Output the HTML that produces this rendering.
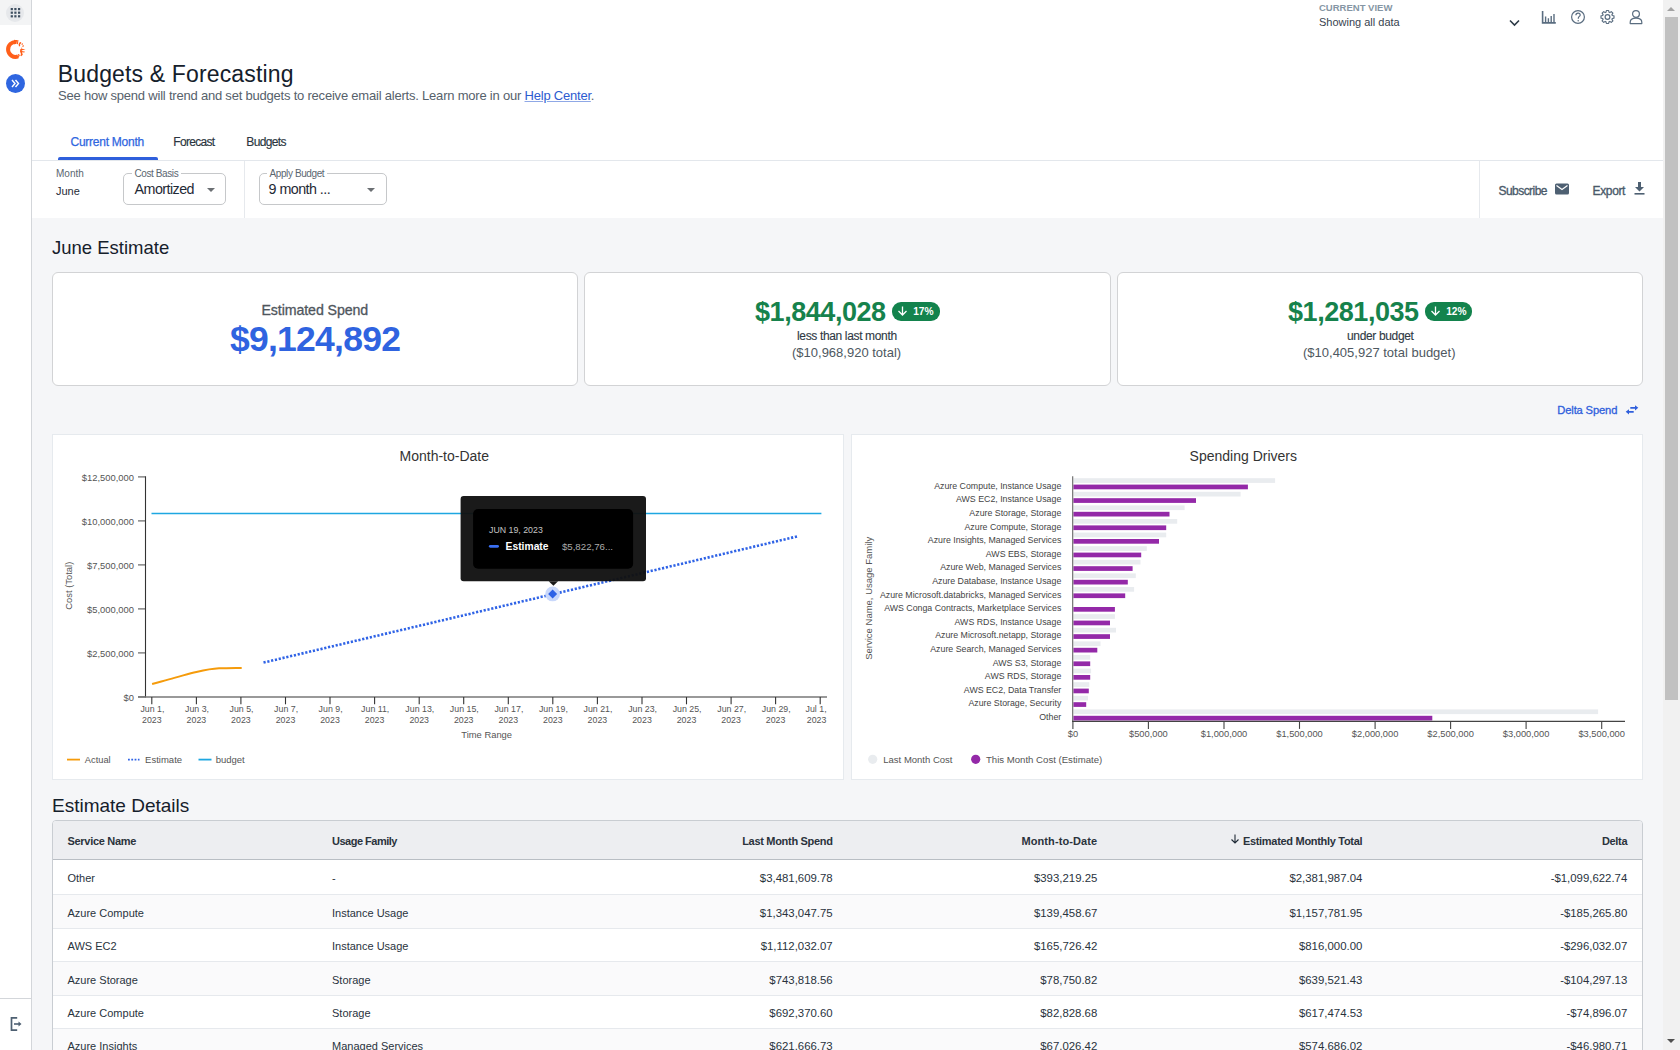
<!DOCTYPE html>
<html><head><meta charset="utf-8">
<style>
*{box-sizing:border-box;margin:0;padding:0}
html,body{width:1680px;height:1050px;overflow:hidden;background:#f5f6f8;font-family:"Liberation Sans",sans-serif;color:#1f2a36}
body{position:relative}
.a{position:absolute;white-space:nowrap}
.card{position:absolute;background:#fff;border:1px solid #d2d3d5;border-radius:6px}
.ccard{position:absolute;background:#fff;border:1px solid #e6eaee}
.badge{position:absolute;background:#13834d;color:#fff;border-radius:9px;font-weight:700;font-size:10.5px;height:18px;line-height:18px}
.sel{position:absolute;border:1px solid #c6c8ca;border-radius:5px;background:#fff}
.lbl{position:absolute;font-size:10px;color:#5b6670;background:#fff;padding:0 3px;line-height:12px;letter-spacing:-0.4px}
.caret{position:absolute;width:0;height:0;border-left:4px solid transparent;border-right:4px solid transparent;border-top:4.5px solid #6b6f73}
</style></head><body>
<!-- sidebar -->
<div class="a" style="left:0;top:0;width:32px;height:1050px;background:#fff;border-right:1px solid #d3d6da"></div>
<div class="a" style="left:0;top:0;width:31px;height:25px;background:#f3f4f5"></div>
<div class="a" style="left:6px;top:4px;width:18px;height:18px;border-radius:50%;background:#e6e8eb"></div>
<svg class="a" style="left:0;top:0" width="31" height="25">
  <g fill="#3e4f60">
    <rect x="10.7" y="8" width="2.2" height="2.2"/><rect x="14.3" y="8" width="2.2" height="2.2"/><rect x="18" y="8" width="2.2" height="2.2"/>
    <rect x="10.7" y="11.6" width="2.2" height="2.2"/><rect x="14.3" y="11.6" width="2.2" height="2.2"/><rect x="18" y="11.6" width="2.2" height="2.2"/>
    <rect x="10.7" y="15.2" width="2.2" height="2.2"/><rect x="14.3" y="15.2" width="2.2" height="2.2"/><rect x="18" y="15.2" width="2.2" height="2.2"/>
  </g>
</svg>
<svg class="a" style="left:0;top:36px" width="31" height="26" viewBox="0 36 31 26">
  <path d="M16.8 42 A7.5 7.5 0 1 0 18.1 56.45" fill="none" stroke="#ff5f1a" stroke-width="4"/>
  <path d="M14 39.8 L15.3 40 L15.6 44 L14.2 44.2 Z" fill="#ff5f1a"/>
  <path d="M17.3 40 L18.4 40.1 L18 44.3 L16.9 44 Z" fill="#ff5f1a"/>
  <path d="M19.4 42.5 L21 42 L21.3 43 L20 44.5 L20.2 46 L19 46.4 L18.6 44.5 Z" fill="#ff5f1a"/>
  <path d="M22 43.2 L23 43.6 L22.4 45 L21.4 44.6 Z" fill="#ff5f1a"/>
  <path d="M23 45 L24 45.7 L23.2 47 L22.2 46.4 Z" fill="#ff5f1a"/>
  <path d="M21.2 47.4 L22.4 48 L21.5 49 Z" fill="#ff5f1a"/>
  <path d="M21 48.8 L25.5 49.3 L21.5 50.5 L22.5 51.2 L24.8 51.5 L24.4 52.5 L22 52.2 L22.8 54.8 L21.2 56.2 L20.4 55.8 L21 54 L20 51.5 L20.2 49.5 Z" fill="#ff5f1a"/>
  <path d="M18 54 L19.2 54.3 L19.8 55.6 L18.6 57.6 L17.6 57.2 L18.3 56 Z" fill="#ff5f1a"/>
</svg>
<div class="a" style="left:6px;top:74px;width:19px;height:19px;border-radius:50%;background:#2f66e0"></div>
<svg class="a" style="left:6px;top:74px" width="19" height="19" viewBox="0 0 19 19"><path d="M6 6 L9 9.5 L6 13 M9.5 6 L12.5 9.5 L9.5 13" fill="none" stroke="#fff" stroke-width="1.4"/></svg>
<svg class="a" style="left:10px;top:1016px" width="13" height="16" viewBox="0 0 13 16"><path d="M7.2 1.8 H1.5 V14.2 H7.2" fill="none" stroke="#4e6072" stroke-width="1.7"/><path d="M4 8 H9" stroke="#4e6072" stroke-width="1.6"/><path d="M8.5 5.5 L11.5 8 L8.5 10.5 Z" fill="#4e6072"/></svg>
<div class="a" style="left:0;top:998px;width:31px;height:1px;background:#d3d6da"></div>

<!-- header -->
<div class="a" style="left:32px;top:0;width:1631px;height:161px;background:#fff;border-bottom:1px solid #e3e7ec"></div>
<div class="a" style="left:32px;top:161px;width:1631px;height:57px;background:#fff"></div>
<div class="a" style="left:244px;top:161px;width:1px;height:57px;background:#e6e9ed"></div>
<div class="a" style="left:1479px;top:161px;width:1px;height:57px;background:#e6e9ed"></div>

<div class="a" style="left:57.8px;top:60px;font-size:23px;color:#15202b;line-height:28px;letter-spacing:0.15px">Budgets &amp; Forecasting</div>
<div class="a" style="left:58px;top:88px;font-size:13px;color:#56616b;line-height:16px;letter-spacing:-0.21px">See how spend will trend and set budgets to receive email alerts. Learn more in our <span style="color:#2d5bd0;text-decoration:underline;text-decoration-color:#8fa8e6">Help Center</span>.</div>

<div class="a" style="left:70.5px;top:135px;font-size:12px;color:#2f66e0;line-height:14px;letter-spacing:-0.25px;-webkit-text-stroke:0.25px #2f66e0">Current Month</div>
<div class="a" style="left:173.3px;top:135px;font-size:12px;color:#2a3540;line-height:14px;letter-spacing:-0.7px;-webkit-text-stroke:0.15px #2a3540">Forecast</div>
<div class="a" style="left:246.3px;top:135px;font-size:12px;color:#2a3540;line-height:14px;letter-spacing:-0.65px;-webkit-text-stroke:0.15px #2a3540">Budgets</div>
<div class="a" style="left:58px;top:157px;width:100px;height:3px;background:#2f5fdc;border-radius:2px 2px 0 0"></div>

<!-- filters -->
<div class="a" style="left:56px;top:168px;font-size:10px;color:#5b6670;line-height:12px">Month</div>
<div class="a" style="left:56px;top:185px;font-size:11px;color:#1f2a36;line-height:13px">June</div>
<div class="sel" style="left:123px;top:173px;width:103px;height:32px"></div>
<div class="lbl" style="left:131.5px;top:167.6px">Cost Basis</div>
<div class="a" style="left:134.6px;top:182px;font-size:14.3px;letter-spacing:-0.55px;color:#1f2a36;line-height:15px">Amortized</div>
<div class="caret" style="left:206.6px;top:187.5px"></div>
<div class="sel" style="left:259px;top:173px;width:128px;height:32px"></div>
<div class="lbl" style="left:266.5px;top:167.6px">Apply Budget</div>
<div class="a" style="left:268.6px;top:182px;font-size:14.3px;letter-spacing:-0.55px;color:#1f2a36;line-height:15px">9 month ...</div>
<div class="caret" style="left:366.6px;top:187.5px"></div>

<div class="a" style="left:1498.5px;top:183.5px;font-size:12px;font-weight:400;color:#4a5a6a;line-height:14px;letter-spacing:-0.55px;-webkit-text-stroke:0.35px #4a5a6a">Subscribe</div>
<svg class="a" style="left:1555px;top:183px" width="14" height="12" viewBox="0 0 14 12"><rect x="0" y="0.5" width="14" height="11" rx="1.5" fill="#4e6072"/><path d="M1.5 2.5 L7 6.5 L12.5 2.5" stroke="#fff" stroke-width="1.2" fill="none"/></svg>
<div class="a" style="left:1592.5px;top:183.5px;font-size:12px;font-weight:400;color:#4a5a6a;line-height:14px;letter-spacing:-0.35px;-webkit-text-stroke:0.35px #4a5a6a">Export</div>
<svg class="a" style="left:1634px;top:182px" width="11" height="13" viewBox="0 0 11 13"><path d="M4 0 H7 V5 H10 L5.5 9.5 L1 5 H4 Z" fill="#4e6072"/><rect x="0.5" y="11" width="10" height="1.6" fill="#4e6072"/></svg>

<!-- top right header -->
<div class="a" style="left:1319px;top:2px;font-size:9.5px;font-weight:700;color:#8596a4;line-height:11px;letter-spacing:0px">CURRENT VIEW</div>
<div class="a" style="left:1319px;top:16px;font-size:11px;color:#37434f;line-height:13px">Showing all data</div>
<svg class="a" style="left:1509px;top:18.5px" width="11" height="8" viewBox="0 0 11 8"><path d="M1 1.5 L5.5 6 L10 1.5" stroke="#2d3a47" stroke-width="1.6" fill="none"/></svg>


<!-- June Estimate -->
<div class="a" style="left:52px;top:237px;font-size:18.5px;color:#15202b;line-height:22px">June Estimate</div>
<div class="card" style="left:52px;top:272px;width:526px;height:114px"></div>
<div class="card" style="left:584px;top:272px;width:527px;height:114px"></div>
<div class="card" style="left:1117px;top:272px;width:526px;height:114px"></div>
<div class="a" style="left:261.5px;top:302px;font-size:14.2px;color:#4f565d;line-height:17px;letter-spacing:-0.1px;-webkit-text-stroke:0.3px #4f565d">Estimated Spend</div>
<div class="a" style="left:230px;top:319.5px;font-size:35.5px;font-weight:700;color:#2f63e0;line-height:38px;letter-spacing:-0.75px">$9,124,892</div>

<div class="a" style="left:755px;top:297.2px;font-size:27px;font-weight:700;color:#16824c;line-height:30px;letter-spacing:-0.45px">$1,844,028</div>
<div class="badge" style="left:892px;top:302px;width:48px;height:19px"></div>
<svg class="a" style="left:897px;top:306px" width="11" height="10" viewBox="0 0 11 10"><path d="M5.5 0.5 V9 M1.5 5 L5.5 9 L9.5 5" stroke="#fff" stroke-width="1.3" fill="none"/></svg>
<div class="a" style="left:913.3px;top:304.5px;font-size:10.2px;font-weight:700;color:#fff;line-height:13px;letter-spacing:-0.1px">17%</div>
<div class="a" style="left:797px;top:328.8px;font-size:12px;font-weight:400;color:#2f3944;line-height:14px;letter-spacing:-0.35px;-webkit-text-stroke:0.12px #2f3944">less than last month</div>
<div class="a" style="left:792px;top:344.5px;font-size:13px;color:#4e5861;line-height:16px">($10,968,920 total)</div>

<div class="a" style="left:1288px;top:297.2px;font-size:27px;font-weight:700;color:#16824c;line-height:30px;letter-spacing:-0.45px">$1,281,035</div>
<div class="badge" style="left:1425px;top:302px;width:47px;height:19px"></div>
<svg class="a" style="left:1430px;top:306px" width="11" height="10" viewBox="0 0 11 10"><path d="M5.5 0.5 V9 M1.5 5 L5.5 9 L9.5 5" stroke="#fff" stroke-width="1.3" fill="none"/></svg>
<div class="a" style="left:1446.3px;top:304.5px;font-size:10.2px;font-weight:700;color:#fff;line-height:13px;letter-spacing:-0.1px">12%</div>
<div class="a" style="left:1347px;top:328.8px;font-size:12px;font-weight:400;color:#2f3944;line-height:14px;letter-spacing:-0.35px;-webkit-text-stroke:0.12px #2f3944">under budget</div>
<div class="a" style="left:1303px;top:344.5px;font-size:13px;color:#4e5861;line-height:16px">($10,405,927 total budget)</div>

<div class="a" style="left:1557.3px;top:403.2px;font-size:11.2px;color:#2f5fdc;line-height:14px;letter-spacing:-0.15px;-webkit-text-stroke:0.3px #2f5fdc">Delta Spend</div>
<svg class="a" style="left:1625px;top:404px" width="14" height="12" viewBox="0 0 14 12"><path d="M5.3 3.8 H10.5 M3.5 7.8 H8.7" stroke="#2f5fdc" stroke-width="1.8" fill="none"/><path d="M10 1.2 L13.3 3.8 L10 6.4 Z M4 5.2 L0.7 7.8 L4 10.4 Z" fill="#2f5fdc"/></svg>

<!-- CHARTS -->
<div class="ccard" style="left:52px;top:434px;width:792px;height:346px"></div>
<div class="ccard" style="left:851px;top:434px;width:792px;height:346px"></div>
<svg class="a" style="left:0;top:0" width="1680" height="1050" viewBox="0 0 1680 1050">
<text x="444.3" y="460.8" text-anchor="middle" font-family="Liberation Sans" font-size="14" fill="#333">Month-to-Date</text>
<line x1="138" y1="696.9" x2="145.5" y2="696.9" stroke="#666" stroke-width="1.2"/>
<text x="134" y="700.5" text-anchor="end" font-family="Liberation Sans" font-size="9.4" fill="#555">$0</text>
<line x1="138" y1="652.9" x2="145.5" y2="652.9" stroke="#666" stroke-width="1.2"/>
<text x="134" y="656.5" text-anchor="end" font-family="Liberation Sans" font-size="9.4" fill="#555">$2,500,000</text>
<line x1="138" y1="608.9" x2="145.5" y2="608.9" stroke="#666" stroke-width="1.2"/>
<text x="134" y="612.5" text-anchor="end" font-family="Liberation Sans" font-size="9.4" fill="#555">$5,000,000</text>
<line x1="138" y1="564.9" x2="145.5" y2="564.9" stroke="#666" stroke-width="1.2"/>
<text x="134" y="568.5" text-anchor="end" font-family="Liberation Sans" font-size="9.4" fill="#555">$7,500,000</text>
<line x1="138" y1="520.9" x2="145.5" y2="520.9" stroke="#666" stroke-width="1.2"/>
<text x="134" y="524.5" text-anchor="end" font-family="Liberation Sans" font-size="9.4" fill="#555">$10,000,000</text>
<line x1="138" y1="476.9" x2="145.5" y2="476.9" stroke="#666" stroke-width="1.2"/>
<text x="134" y="480.5" text-anchor="end" font-family="Liberation Sans" font-size="9.4" fill="#555">$12,500,000</text>
<line x1="145.5" y1="476.3" x2="145.5" y2="697.5" stroke="#333" stroke-width="1.1"/>
<line x1="138" y1="697" x2="827" y2="697" stroke="#777" stroke-width="1.4"/>
<line x1="151.8" y1="697" x2="151.8" y2="704.3" stroke="#333" stroke-width="1.1"/>
<text x="152.4" y="711.9" text-anchor="middle" font-family="Liberation Sans" font-size="8.8" fill="#555">Jun 1,</text>
<text x="151.8" y="722.7" text-anchor="middle" font-family="Liberation Sans" font-size="8.8" fill="#555">2023</text>
<line x1="196.4" y1="697" x2="196.4" y2="704.3" stroke="#333" stroke-width="1.1"/>
<text x="197.0" y="711.9" text-anchor="middle" font-family="Liberation Sans" font-size="8.8" fill="#555">Jun 3,</text>
<text x="196.4" y="722.7" text-anchor="middle" font-family="Liberation Sans" font-size="8.8" fill="#555">2023</text>
<line x1="240.9" y1="697" x2="240.9" y2="704.3" stroke="#333" stroke-width="1.1"/>
<text x="241.5" y="711.9" text-anchor="middle" font-family="Liberation Sans" font-size="8.8" fill="#555">Jun 5,</text>
<text x="240.9" y="722.7" text-anchor="middle" font-family="Liberation Sans" font-size="8.8" fill="#555">2023</text>
<line x1="285.5" y1="697" x2="285.5" y2="704.3" stroke="#333" stroke-width="1.1"/>
<text x="286.1" y="711.9" text-anchor="middle" font-family="Liberation Sans" font-size="8.8" fill="#555">Jun 7,</text>
<text x="285.5" y="722.7" text-anchor="middle" font-family="Liberation Sans" font-size="8.8" fill="#555">2023</text>
<line x1="330.0" y1="697" x2="330.0" y2="704.3" stroke="#333" stroke-width="1.1"/>
<text x="330.6" y="711.9" text-anchor="middle" font-family="Liberation Sans" font-size="8.8" fill="#555">Jun 9,</text>
<text x="330.0" y="722.7" text-anchor="middle" font-family="Liberation Sans" font-size="8.8" fill="#555">2023</text>
<line x1="374.6" y1="697" x2="374.6" y2="704.3" stroke="#333" stroke-width="1.1"/>
<text x="375.2" y="711.9" text-anchor="middle" font-family="Liberation Sans" font-size="8.8" fill="#555">Jun 11,</text>
<text x="374.6" y="722.7" text-anchor="middle" font-family="Liberation Sans" font-size="8.8" fill="#555">2023</text>
<line x1="419.2" y1="697" x2="419.2" y2="704.3" stroke="#333" stroke-width="1.1"/>
<text x="419.8" y="711.9" text-anchor="middle" font-family="Liberation Sans" font-size="8.8" fill="#555">Jun 13,</text>
<text x="419.2" y="722.7" text-anchor="middle" font-family="Liberation Sans" font-size="8.8" fill="#555">2023</text>
<line x1="463.7" y1="697" x2="463.7" y2="704.3" stroke="#333" stroke-width="1.1"/>
<text x="464.3" y="711.9" text-anchor="middle" font-family="Liberation Sans" font-size="8.8" fill="#555">Jun 15,</text>
<text x="463.7" y="722.7" text-anchor="middle" font-family="Liberation Sans" font-size="8.8" fill="#555">2023</text>
<line x1="508.3" y1="697" x2="508.3" y2="704.3" stroke="#333" stroke-width="1.1"/>
<text x="508.9" y="711.9" text-anchor="middle" font-family="Liberation Sans" font-size="8.8" fill="#555">Jun 17,</text>
<text x="508.3" y="722.7" text-anchor="middle" font-family="Liberation Sans" font-size="8.8" fill="#555">2023</text>
<line x1="552.8" y1="697" x2="552.8" y2="704.3" stroke="#333" stroke-width="1.1"/>
<text x="553.4" y="711.9" text-anchor="middle" font-family="Liberation Sans" font-size="8.8" fill="#555">Jun 19,</text>
<text x="552.8" y="722.7" text-anchor="middle" font-family="Liberation Sans" font-size="8.8" fill="#555">2023</text>
<line x1="597.4" y1="697" x2="597.4" y2="704.3" stroke="#333" stroke-width="1.1"/>
<text x="598.0" y="711.9" text-anchor="middle" font-family="Liberation Sans" font-size="8.8" fill="#555">Jun 21,</text>
<text x="597.4" y="722.7" text-anchor="middle" font-family="Liberation Sans" font-size="8.8" fill="#555">2023</text>
<line x1="642.0" y1="697" x2="642.0" y2="704.3" stroke="#333" stroke-width="1.1"/>
<text x="642.6" y="711.9" text-anchor="middle" font-family="Liberation Sans" font-size="8.8" fill="#555">Jun 23,</text>
<text x="642.0" y="722.7" text-anchor="middle" font-family="Liberation Sans" font-size="8.8" fill="#555">2023</text>
<line x1="686.5" y1="697" x2="686.5" y2="704.3" stroke="#333" stroke-width="1.1"/>
<text x="687.1" y="711.9" text-anchor="middle" font-family="Liberation Sans" font-size="8.8" fill="#555">Jun 25,</text>
<text x="686.5" y="722.7" text-anchor="middle" font-family="Liberation Sans" font-size="8.8" fill="#555">2023</text>
<line x1="731.1" y1="697" x2="731.1" y2="704.3" stroke="#333" stroke-width="1.1"/>
<text x="731.7" y="711.9" text-anchor="middle" font-family="Liberation Sans" font-size="8.8" fill="#555">Jun 27,</text>
<text x="731.1" y="722.7" text-anchor="middle" font-family="Liberation Sans" font-size="8.8" fill="#555">2023</text>
<line x1="775.6" y1="697" x2="775.6" y2="704.3" stroke="#333" stroke-width="1.1"/>
<text x="776.2" y="711.9" text-anchor="middle" font-family="Liberation Sans" font-size="8.8" fill="#555">Jun 29,</text>
<text x="775.6" y="722.7" text-anchor="middle" font-family="Liberation Sans" font-size="8.8" fill="#555">2023</text>
<line x1="820.2" y1="697" x2="820.2" y2="704.3" stroke="#333" stroke-width="1.1"/>
<text x="826.6" y="711.9" text-anchor="end" font-family="Liberation Sans" font-size="8.8" fill="#555">Jul 1,</text>
<text x="826.4" y="722.7" text-anchor="end" font-family="Liberation Sans" font-size="8.8" fill="#555">2023</text>
<text x="486.7" y="738" text-anchor="middle" font-family="Liberation Sans" font-size="9.4" fill="#555">Time Range</text>
<text transform="translate(72.3 585.7) rotate(-90)" text-anchor="middle" font-family="Liberation Sans" font-size="9.4" fill="#555">Cost (Total)</text>
<line x1="151.5" y1="513.5" x2="821.4" y2="513.5" stroke="#1ea7e1" stroke-width="1.6"/>
<path d="M152.1 684 C159.5 682 167 679.8 174.3 677.9 C181.7 676 189 673.5 196.4 671.9 C204 670.2 211.5 668.7 219 668.3 C226.6 668 234 668 241.7 667.9" fill="none" stroke="#f59b0b" stroke-width="2"/>
<line x1="263.5" y1="662.6" x2="798.2" y2="536.2" stroke="#2f63e6" stroke-width="2.6" stroke-dasharray="2.2 1.7"/>
<circle cx="552.6" cy="593.9" r="7.4" fill="#c9d8fb"/>
<path d="M552.6 589.4 L557.1 593.9 L552.6 598.4 L548.1 593.9 Z" fill="#2f63e6"/>
<rect x="460.6" y="496" width="185.4" height="85.3" rx="3" fill="#111" fill-opacity="0.96"/>
<path d="M548.7 581.2 L558.1 581.2 L553.4 585.8 Z" fill="#111" fill-opacity="0.96"/>
<rect x="473.1" y="509" width="160" height="59.8" rx="5" fill="#000"/>
<text x="489" y="532.9" font-family="Liberation Sans" font-size="8.8" fill="#c4c4c4">JUN 19, 2023</text>
<line x1="490.3" y1="546.3" x2="497.6" y2="546.3" stroke="#3a6ff2" stroke-width="2.8" stroke-linecap="round"/>
<text x="505.6" y="550" font-family="Liberation Sans" font-size="10.3" font-weight="700" fill="#fff">Estimate</text>
<text x="561.9" y="550" font-family="Liberation Sans" font-size="9.7" fill="#aaa">$5,822,76...</text>
<line x1="67" y1="759.6" x2="80" y2="759.6" stroke="#f59b0b" stroke-width="1.8"/>
<text x="84.8" y="762.6" font-family="Liberation Sans" font-size="9.3" fill="#555">Actual</text>
<line x1="128" y1="759.6" x2="139.5" y2="759.6" stroke="#2f63e6" stroke-width="1.8" stroke-dasharray="1.8 1.5"/>
<text x="145.1" y="762.6" font-family="Liberation Sans" font-size="9.5" fill="#555">Estimate</text>
<line x1="198.5" y1="759.6" x2="211.5" y2="759.6" stroke="#1ea7e1" stroke-width="1.8"/>
<text x="215.7" y="762.6" font-family="Liberation Sans" font-size="9.5" fill="#555">budget</text>
<text x="1243.3" y="460.8" text-anchor="middle" font-family="Liberation Sans" font-size="14" fill="#333">Spending Drivers</text>
<rect x="1073.4" y="478.2" width="201.7" height="4.7" fill="#e9ecef"/>
<rect x="1073.4" y="484.6" width="174.5" height="4.7" fill="#9429a8"/>
<text x="1061.3" y="488.8" text-anchor="end" font-family="Liberation Sans" font-size="8.8" fill="#444">Azure Compute, Instance Usage</text>
<rect x="1073.4" y="491.8" width="167.2" height="4.7" fill="#e9ecef"/>
<rect x="1073.4" y="498.2" width="122.6" height="4.7" fill="#9429a8"/>
<text x="1061.3" y="502.4" text-anchor="end" font-family="Liberation Sans" font-size="8.8" fill="#444">AWS EC2, Instance Usage</text>
<rect x="1073.4" y="505.4" width="111.2" height="4.7" fill="#e9ecef"/>
<rect x="1073.4" y="511.8" width="96.1" height="4.7" fill="#9429a8"/>
<text x="1061.3" y="516.0" text-anchor="end" font-family="Liberation Sans" font-size="8.8" fill="#444">Azure Storage, Storage</text>
<rect x="1073.4" y="519.0" width="103.8" height="4.7" fill="#e9ecef"/>
<rect x="1073.4" y="525.4" width="92.8" height="4.7" fill="#9429a8"/>
<text x="1061.3" y="529.6" text-anchor="end" font-family="Liberation Sans" font-size="8.8" fill="#444">Azure Compute, Storage</text>
<rect x="1073.4" y="532.6" width="92.8" height="4.7" fill="#e9ecef"/>
<rect x="1073.4" y="539.0" width="85.6" height="4.7" fill="#9429a8"/>
<text x="1061.3" y="543.2" text-anchor="end" font-family="Liberation Sans" font-size="8.8" fill="#444">Azure Insights, Managed Services</text>
<rect x="1073.4" y="546.2" width="73.4" height="4.7" fill="#e9ecef"/>
<rect x="1073.4" y="552.6" width="67.8" height="4.7" fill="#9429a8"/>
<text x="1061.3" y="556.8" text-anchor="end" font-family="Liberation Sans" font-size="8.8" fill="#444">AWS EBS, Storage</text>
<rect x="1073.4" y="559.8" width="67.1" height="4.7" fill="#e9ecef"/>
<rect x="1073.4" y="566.2" width="59.2" height="4.7" fill="#9429a8"/>
<text x="1061.3" y="570.4" text-anchor="end" font-family="Liberation Sans" font-size="8.8" fill="#444">Azure Web, Managed Services</text>
<rect x="1073.4" y="573.4" width="62.4" height="4.7" fill="#e9ecef"/>
<rect x="1073.4" y="579.8" width="54.4" height="4.7" fill="#9429a8"/>
<text x="1061.3" y="584.0" text-anchor="end" font-family="Liberation Sans" font-size="8.8" fill="#444">Azure Database, Instance Usage</text>
<rect x="1073.4" y="587.0" width="60.7" height="4.7" fill="#e9ecef"/>
<rect x="1073.4" y="593.4" width="51.8" height="4.7" fill="#9429a8"/>
<text x="1061.3" y="597.6" text-anchor="end" font-family="Liberation Sans" font-size="8.8" fill="#444">Azure Microsoft.databricks, Managed Services</text>
<rect x="1073.4" y="607.0" width="41.5" height="4.7" fill="#9429a8"/>
<text x="1061.3" y="611.2" text-anchor="end" font-family="Liberation Sans" font-size="8.8" fill="#444">AWS Conga Contracts, Marketplace Services</text>
<rect x="1073.4" y="614.2" width="41.5" height="4.7" fill="#e9ecef"/>
<rect x="1073.4" y="620.6" width="36.6" height="4.7" fill="#9429a8"/>
<text x="1061.3" y="624.8" text-anchor="end" font-family="Liberation Sans" font-size="8.8" fill="#444">AWS RDS, Instance Usage</text>
<rect x="1073.4" y="627.8" width="42.6" height="4.7" fill="#e9ecef"/>
<rect x="1073.4" y="634.2" width="36.6" height="4.7" fill="#9429a8"/>
<text x="1061.3" y="638.4" text-anchor="end" font-family="Liberation Sans" font-size="8.8" fill="#444">Azure Microsoft.netapp, Storage</text>
<rect x="1073.4" y="641.4" width="27.1" height="4.7" fill="#e9ecef"/>
<rect x="1073.4" y="647.8" width="23.9" height="4.7" fill="#9429a8"/>
<text x="1061.3" y="652.0" text-anchor="end" font-family="Liberation Sans" font-size="8.8" fill="#444">Azure Search, Managed Services</text>
<rect x="1073.4" y="655.0" width="16.8" height="4.7" fill="#e9ecef"/>
<rect x="1073.4" y="661.4" width="16.8" height="4.7" fill="#9429a8"/>
<text x="1061.3" y="665.6" text-anchor="end" font-family="Liberation Sans" font-size="8.8" fill="#444">AWS S3, Storage</text>
<rect x="1073.4" y="668.6" width="17.7" height="4.7" fill="#e9ecef"/>
<rect x="1073.4" y="675.0" width="16.8" height="4.7" fill="#9429a8"/>
<text x="1061.3" y="679.2" text-anchor="end" font-family="Liberation Sans" font-size="8.8" fill="#444">AWS RDS, Storage</text>
<rect x="1073.4" y="682.2" width="15.9" height="4.7" fill="#e9ecef"/>
<rect x="1073.4" y="688.6" width="15.4" height="4.7" fill="#9429a8"/>
<text x="1061.3" y="692.8" text-anchor="end" font-family="Liberation Sans" font-size="8.8" fill="#444">AWS EC2, Data Transfer</text>
<rect x="1073.4" y="695.8" width="14.6" height="4.7" fill="#e9ecef"/>
<rect x="1073.4" y="702.2" width="12.8" height="4.7" fill="#9429a8"/>
<text x="1061.3" y="706.4" text-anchor="end" font-family="Liberation Sans" font-size="8.8" fill="#444">Azure Storage, Security</text>
<rect x="1073.4" y="709.4" width="524.7" height="4.7" fill="#e9ecef"/>
<rect x="1073.4" y="715.8" width="358.9" height="4.7" fill="#9429a8"/>
<text x="1061.3" y="720.0" text-anchor="end" font-family="Liberation Sans" font-size="8.8" fill="#444">Other</text>
<line x1="1072.7" y1="476.2" x2="1072.7" y2="722" stroke="#666" stroke-width="1.1"/>
<line x1="1072.2" y1="721.4" x2="1625" y2="721.4" stroke="#444" stroke-width="1.3"/>
<line x1="1072.9" y1="721" x2="1072.9" y2="728.9" stroke="#444" stroke-width="1.1"/>
<text x="1072.9" y="736.7" text-anchor="middle" font-family="Liberation Sans" font-size="9.3" fill="#555">$0</text>
<line x1="1148.4" y1="721" x2="1148.4" y2="728.9" stroke="#444" stroke-width="1.1"/>
<text x="1148.4" y="736.7" text-anchor="middle" font-family="Liberation Sans" font-size="9.3" fill="#555">$500,000</text>
<line x1="1224.0" y1="721" x2="1224.0" y2="728.9" stroke="#444" stroke-width="1.1"/>
<text x="1224.0" y="736.7" text-anchor="middle" font-family="Liberation Sans" font-size="9.3" fill="#555">$1,000,000</text>
<line x1="1299.5" y1="721" x2="1299.5" y2="728.9" stroke="#444" stroke-width="1.1"/>
<text x="1299.5" y="736.7" text-anchor="middle" font-family="Liberation Sans" font-size="9.3" fill="#555">$1,500,000</text>
<line x1="1375.1" y1="721" x2="1375.1" y2="728.9" stroke="#444" stroke-width="1.1"/>
<text x="1375.1" y="736.7" text-anchor="middle" font-family="Liberation Sans" font-size="9.3" fill="#555">$2,000,000</text>
<line x1="1450.6" y1="721" x2="1450.6" y2="728.9" stroke="#444" stroke-width="1.1"/>
<text x="1450.6" y="736.7" text-anchor="middle" font-family="Liberation Sans" font-size="9.3" fill="#555">$2,500,000</text>
<line x1="1526.1" y1="721" x2="1526.1" y2="728.9" stroke="#444" stroke-width="1.1"/>
<text x="1526.1" y="736.7" text-anchor="middle" font-family="Liberation Sans" font-size="9.3" fill="#555">$3,000,000</text>
<line x1="1601.7" y1="721" x2="1601.7" y2="728.9" stroke="#444" stroke-width="1.1"/>
<text x="1601.7" y="736.7" text-anchor="middle" font-family="Liberation Sans" font-size="9.3" fill="#555">$3,500,000</text>
<text transform="translate(871.5 598.3) rotate(-90)" text-anchor="middle" font-family="Liberation Sans" font-size="9.5" fill="#555">Service Name, Usage Family</text>
<circle cx="872.7" cy="759.3" r="4.6" fill="#e9ecef"/>
<text x="883.3" y="762.6" font-family="Liberation Sans" font-size="9.5" fill="#555">Last Month Cost</text>
<circle cx="975.7" cy="759.3" r="4.6" fill="#9429a8"/>
<text x="986" y="762.6" font-family="Liberation Sans" font-size="9.6" fill="#555">This Month Cost (Estimate)</text>
</svg>
<!-- /CHARTS -->
<!-- TABLE -->
<div class="a" style="left:52px;top:794px;font-size:19px;color:#15202b;line-height:23px">Estimate Details</div>
<div class="a" style="left:52px;top:820px;width:1591px;height:240px;background:#fff;border:1px solid #c9cdd2;border-radius:4px 4px 0 0"></div>
<div class="a" style="left:53px;top:821px;width:1589px;height:38px;background:#edeef1;border-radius:3px 3px 0 0"></div>
<div class="a" style="left:53px;top:859px;width:1589px;height:1px;background:#b9bec4"></div>
<div class="a" style="left:53px;top:860px;width:1589px;height:34px;background:#fff"></div>
<div class="a" style="left:53px;top:895px;width:1589px;height:32.5px;background:#fafafb"></div>
<div class="a" style="left:53px;top:928.5px;width:1589px;height:32.5px;background:#fff"></div>
<div class="a" style="left:53px;top:962px;width:1589px;height:32.5px;background:#fafafb"></div>
<div class="a" style="left:53px;top:995.5px;width:1589px;height:32.5px;background:#fff"></div>
<div class="a" style="left:53px;top:1029px;width:1589px;height:33px;background:#fafafb"></div>
<div class="a" style="left:53px;top:894px;width:1589px;height:1px;background:#e6e9ed"></div>
<div class="a" style="left:53px;top:927.5px;width:1589px;height:1px;background:#e6e9ed"></div>
<div class="a" style="left:53px;top:961px;width:1589px;height:1px;background:#e6e9ed"></div>
<div class="a" style="left:53px;top:994.5px;width:1589px;height:1px;background:#e6e9ed"></div>
<div class="a" style="left:53px;top:1028px;width:1589px;height:1px;background:#e6e9ed"></div>
<div class="a" style="left:67.5px;top:834.7px;font-size:11px;font-weight:700;color:#2b333c;line-height:13px;letter-spacing:-0.3px">Service Name</div>
<div class="a" style="left:332px;top:834.7px;font-size:11px;font-weight:700;color:#2b333c;line-height:13px;letter-spacing:-0.3px;letter-spacing:-0.5px">Usage Family</div>
<div class="a" style="left:532.7px;width:300px;text-align:right;top:834.7px;font-size:11px;font-weight:700;color:#2b333c;line-height:13px;letter-spacing:-0.3px">Last Month Spend</div>
<div class="a" style="left:797.3px;width:300px;text-align:right;top:834.7px;font-size:11px;font-weight:700;color:#2b333c;line-height:13px;letter-spacing:-0.3px;letter-spacing:0.1px">Month-to-Date</div>
<div class="a" style="left:1062.3px;width:300px;text-align:right;top:834.7px;font-size:11px;font-weight:700;color:#2b333c;line-height:13px;letter-spacing:-0.3px">Estimated Monthly Total</div>
<div class="a" style="left:1327.3px;width:300px;text-align:right;top:834.7px;font-size:11px;font-weight:700;color:#2b333c;line-height:13px;letter-spacing:-0.3px">Delta</div>
<svg class="a" style="left:1230px;top:834px" width="10" height="10" viewBox="0 0 10 10"><path d="M5 0.5 V9 M1.5 5.5 L5 9 L8.5 5.5" stroke="#1f2a36" stroke-width="1.1" fill="none"/></svg>
<div class="a" style="left:67.5px;top:870.5px;font-size:11.4px;color:#29333d;line-height:14px;font-size:11px">Other</div>
<div class="a" style="left:332px;top:870.5px;font-size:11.4px;color:#29333d;line-height:14px;font-size:11px">-</div>
<div class="a" style="left:532.7px;width:300px;text-align:right;top:870.5px;font-size:11.4px;color:#29333d;line-height:14px">$3,481,609.78</div>
<div class="a" style="left:797.3px;width:300px;text-align:right;top:870.5px;font-size:11.4px;color:#29333d;line-height:14px">$393,219.25</div>
<div class="a" style="left:1062.3px;width:300px;text-align:right;top:870.5px;font-size:11.4px;color:#29333d;line-height:14px">$2,381,987.04</div>
<div class="a" style="left:1327.3px;width:300px;text-align:right;top:870.5px;font-size:11.4px;color:#29333d;line-height:14px">-$1,099,622.74</div>
<div class="a" style="left:67.5px;top:905.5px;font-size:11.4px;color:#29333d;line-height:14px;font-size:11px">Azure Compute</div>
<div class="a" style="left:332px;top:905.5px;font-size:11.4px;color:#29333d;line-height:14px;font-size:11px">Instance Usage</div>
<div class="a" style="left:532.7px;width:300px;text-align:right;top:905.5px;font-size:11.4px;color:#29333d;line-height:14px">$1,343,047.75</div>
<div class="a" style="left:797.3px;width:300px;text-align:right;top:905.5px;font-size:11.4px;color:#29333d;line-height:14px">$139,458.67</div>
<div class="a" style="left:1062.3px;width:300px;text-align:right;top:905.5px;font-size:11.4px;color:#29333d;line-height:14px">$1,157,781.95</div>
<div class="a" style="left:1327.3px;width:300px;text-align:right;top:905.5px;font-size:11.4px;color:#29333d;line-height:14px">-$185,265.80</div>
<div class="a" style="left:67.5px;top:938.75px;font-size:11.4px;color:#29333d;line-height:14px;font-size:11px">AWS EC2</div>
<div class="a" style="left:332px;top:938.75px;font-size:11.4px;color:#29333d;line-height:14px;font-size:11px">Instance Usage</div>
<div class="a" style="left:532.7px;width:300px;text-align:right;top:938.75px;font-size:11.4px;color:#29333d;line-height:14px">$1,112,032.07</div>
<div class="a" style="left:797.3px;width:300px;text-align:right;top:938.75px;font-size:11.4px;color:#29333d;line-height:14px">$165,726.42</div>
<div class="a" style="left:1062.3px;width:300px;text-align:right;top:938.75px;font-size:11.4px;color:#29333d;line-height:14px">$816,000.00</div>
<div class="a" style="left:1327.3px;width:300px;text-align:right;top:938.75px;font-size:11.4px;color:#29333d;line-height:14px">-$296,032.07</div>
<div class="a" style="left:67.5px;top:972.5px;font-size:11.4px;color:#29333d;line-height:14px;font-size:11px">Azure Storage</div>
<div class="a" style="left:332px;top:972.5px;font-size:11.4px;color:#29333d;line-height:14px;font-size:11px">Storage</div>
<div class="a" style="left:532.7px;width:300px;text-align:right;top:972.5px;font-size:11.4px;color:#29333d;line-height:14px">$743,818.56</div>
<div class="a" style="left:797.3px;width:300px;text-align:right;top:972.5px;font-size:11.4px;color:#29333d;line-height:14px">$78,750.82</div>
<div class="a" style="left:1062.3px;width:300px;text-align:right;top:972.5px;font-size:11.4px;color:#29333d;line-height:14px">$639,521.43</div>
<div class="a" style="left:1327.3px;width:300px;text-align:right;top:972.5px;font-size:11.4px;color:#29333d;line-height:14px">-$104,297.13</div>
<div class="a" style="left:67.5px;top:1005.5px;font-size:11.4px;color:#29333d;line-height:14px;font-size:11px">Azure Compute</div>
<div class="a" style="left:332px;top:1005.5px;font-size:11.4px;color:#29333d;line-height:14px;font-size:11px">Storage</div>
<div class="a" style="left:532.7px;width:300px;text-align:right;top:1005.5px;font-size:11.4px;color:#29333d;line-height:14px">$692,370.60</div>
<div class="a" style="left:797.3px;width:300px;text-align:right;top:1005.5px;font-size:11.4px;color:#29333d;line-height:14px">$82,828.68</div>
<div class="a" style="left:1062.3px;width:300px;text-align:right;top:1005.5px;font-size:11.4px;color:#29333d;line-height:14px">$617,474.53</div>
<div class="a" style="left:1327.3px;width:300px;text-align:right;top:1005.5px;font-size:11.4px;color:#29333d;line-height:14px">-$74,896.07</div>
<div class="a" style="left:67.5px;top:1039px;font-size:11.4px;color:#29333d;line-height:14px;font-size:11px">Azure Insights</div>
<div class="a" style="left:332px;top:1039px;font-size:11.4px;color:#29333d;line-height:14px;font-size:11px">Managed Services</div>
<div class="a" style="left:532.7px;width:300px;text-align:right;top:1039px;font-size:11.4px;color:#29333d;line-height:14px">$621,666.73</div>
<div class="a" style="left:797.3px;width:300px;text-align:right;top:1039px;font-size:11.4px;color:#29333d;line-height:14px">$67,026.42</div>
<div class="a" style="left:1062.3px;width:300px;text-align:right;top:1039px;font-size:11.4px;color:#29333d;line-height:14px">$574,686.02</div>
<div class="a" style="left:1327.3px;width:300px;text-align:right;top:1039px;font-size:11.4px;color:#29333d;line-height:14px">-$46,980.71</div>
<!-- /TABLE -->
<svg class="a" style="left:1540px;top:9px" width="18" height="16" viewBox="0 0 18 16">
  <path d="M2.6 2 V13.9 H15.8" fill="none" stroke="#5a6d80" stroke-width="1.6"/>
  <path d="M5.6 7.5 V13 M8.4 9.2 V13 M11.2 7 V13 M14 5 V13" stroke="#5a6d80" stroke-width="1.4"/>
</svg>
<svg class="a" style="left:1570px;top:9px" width="17" height="16" viewBox="0 0 17 16">
  <circle cx="8" cy="8" r="6.4" fill="none" stroke="#5a6d80" stroke-width="1.2"/>
  <path d="M5.9 6.3 C5.9 4.9 6.9 4.1 8.1 4.1 C9.3 4.1 10.2 4.9 10.2 6 C10.2 7.3 8.3 7.6 8.3 9.2 V9.8" fill="none" stroke="#5a6d80" stroke-width="1.2"/>
  <circle cx="8.2" cy="11.8" r="0.75" fill="#5a6d80"/>
</svg>
<svg class="a" style="left:1599px;top:9px" width="17" height="16" viewBox="0 0 17 16">
  <path d="M13.28 6.52 L15.00 6.88 L15.00 9.12 L13.28 9.48 L12.92 10.33 L13.89 11.81 L12.31 13.39 L10.83 12.42 L9.98 12.78 L9.62 14.50 L7.38 14.50 L7.02 12.78 L6.17 12.42 L4.69 13.39 L3.11 11.81 L4.08 10.33 L3.72 9.48 L2.00 9.12 L2.00 6.88 L3.72 6.52 L4.08 5.67 L3.11 4.19 L4.69 2.61 L6.17 3.58 L7.02 3.22 L7.38 1.50 L9.62 1.50 L9.98 3.22 L10.83 3.58 L12.31 2.61 L13.89 4.19 L12.92 5.67 Z" fill="none" stroke="#5a6d80" stroke-width="1.15" stroke-linejoin="round"/>
  <circle cx="8.5" cy="8" r="2.4" fill="none" stroke="#5a6d80" stroke-width="1.2"/>
</svg>
<svg class="a" style="left:1628px;top:9px" width="16" height="16" viewBox="0 0 16 16">
  <circle cx="8" cy="5" r="3.4" fill="none" stroke="#5a6d80" stroke-width="1.2"/>
  <path d="M2.2 14.6 V13.2 C2.2 10.8 4.2 9.2 8 9.2 C11.8 9.2 13.8 10.8 13.8 13.2 V14.6 Z" fill="none" stroke="#5a6d80" stroke-width="1.2" stroke-linejoin="round"/>
</svg>
<!-- scrollbar -->
<div class="a" style="left:1663px;top:0;width:17px;height:1050px;background:#f1f1f1"></div>
<div class="a" style="left:1665px;top:17px;width:13px;height:683px;background:#c1c1c1"></div>
<div class="a" style="left:1667px;top:7px;width:0;height:0;border-left:4px solid transparent;border-right:4px solid transparent;border-bottom:4px solid #a3a3a3"></div>
<div class="a" style="left:1667px;top:1039px;width:0;height:0;border-left:4px solid transparent;border-right:4px solid transparent;border-top:4px solid #505050"></div>
</body></html>
